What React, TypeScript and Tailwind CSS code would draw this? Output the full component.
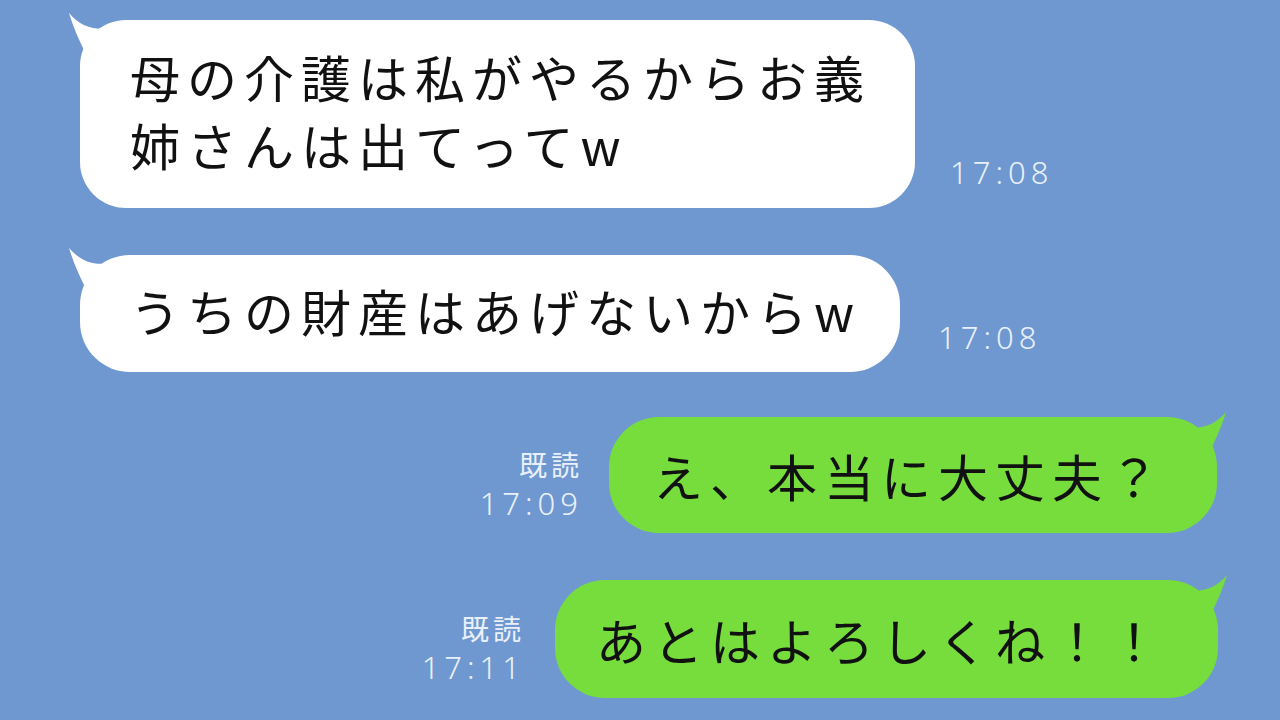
import React from "react";

const JP = { fontFamily: '"Noto Sans CJK JP", "Noto Sans", sans-serif' };
const TS = { fontFamily: '"Noto Sans", "Noto Sans CJK JP", sans-serif' };

function TailLeft({ color }: { color: string }) {
  return (
    <svg
      className="absolute left-[-12px] top-[-8px]"
      width="44"
      height="44"
      viewBox="0 0 44 44"
    >
      <path d="M1 1 C 5 14, 10 26, 18 42 L 42 16 C 26 19, 12 14, 1 1 Z" fill={color} />
    </svg>
  );
}

function TailRight({ color }: { color: string }) {
  return (
    <svg
      className="absolute right-[-10px] top-[-6px] -scale-x-100"
      width="44"
      height="44"
      viewBox="0 0 44 44"
    >
      <path d="M1 1 C 5 14, 10 26, 18 42 L 42 16 C 26 19, 12 14, 1 1 Z" fill={color} />
    </svg>
  );
}

function Time({ t, className = "" }: { t: string; className?: string }) {
  return (
    <div
      style={TS}
      className={`text-[31px] leading-none font-light tracking-[5px] text-[#eaf0fa] ${className}`}
    >
      {t}
    </div>
  );
}

export default function App() {
  return (
    <div className="w-[1280px] h-[720px] bg-[#6f98d0] overflow-hidden flex flex-col">
      {/* Row 1 */}
      <div className="mt-[20px] pl-[80px] flex items-end">
        <div className="relative w-[835px] h-[188px] bg-white rounded-[46px] pl-[50px] pb-[8px] flex flex-col justify-center">
          <TailLeft color="#ffffff" />
          <div style={JP} className="relative text-[50px] leading-[68px] tracking-[7px] text-[#111] whitespace-nowrap">
            <div>母の介護は私がやるからお義</div>
            <div>姉さんは出てってw</div>
          </div>
        </div>
        <Time t="17:08" className="ml-[35px] mb-[20px]" />
      </div>

      {/* Row 2 */}
      <div className="mt-[47px] pl-[80px] flex items-end">
        <div className="relative w-[820px] h-[117px] bg-white rounded-[50px] pl-[50px] pb-[8px] flex items-center">
          <TailLeft color="#ffffff" />
          <div style={JP} className="relative text-[50px] leading-[68px] tracking-[7px] text-[#111] whitespace-nowrap">
            うちの財産はあげないからw
          </div>
        </div>
        <Time t="17:08" className="ml-[38px] mb-[19px]" />
      </div>

      {/* Row 3 */}
      <div className="mt-[45px] pr-[63px] flex items-end justify-end">
        <div className="flex flex-col items-end gap-[10px] mr-[26px] mb-[14px]">
          <div style={JP} className="text-[28px] leading-none tracking-[4px] text-[#eaf0fa]">既読</div>
          <Time t="17:09" />
        </div>
        <div className="relative w-[608px] h-[116px] bg-[#77dd3d] rounded-[50px] pl-[44px] flex items-center">
          <TailRight color="#77dd3d" />
          <div style={JP} className="relative text-[50px] leading-[68px] tracking-[7px] text-[#111] whitespace-nowrap">
            え、本当に大丈夫？
          </div>
        </div>
      </div>

      {/* Row 4 */}
      <div className="mt-[47px] pr-[62px] flex items-end justify-end">
        <div className="flex flex-col items-end gap-[10px] mr-[30px] mb-[15px]">
          <div style={JP} className="text-[28px] leading-none tracking-[4px] text-[#eaf0fa]">既読</div>
          <Time t="17:11" />
        </div>
        <div className="relative w-[663px] h-[118px] bg-[#77dd3d] rounded-[50px] pl-[41px] flex items-center">
          <TailRight color="#77dd3d" />
          <div style={JP} className="relative text-[50px] leading-[68px] tracking-[7px] text-[#111] whitespace-nowrap">
            あとはよろしくね！！
          </div>
        </div>
      </div>
    </div>
  );
}
